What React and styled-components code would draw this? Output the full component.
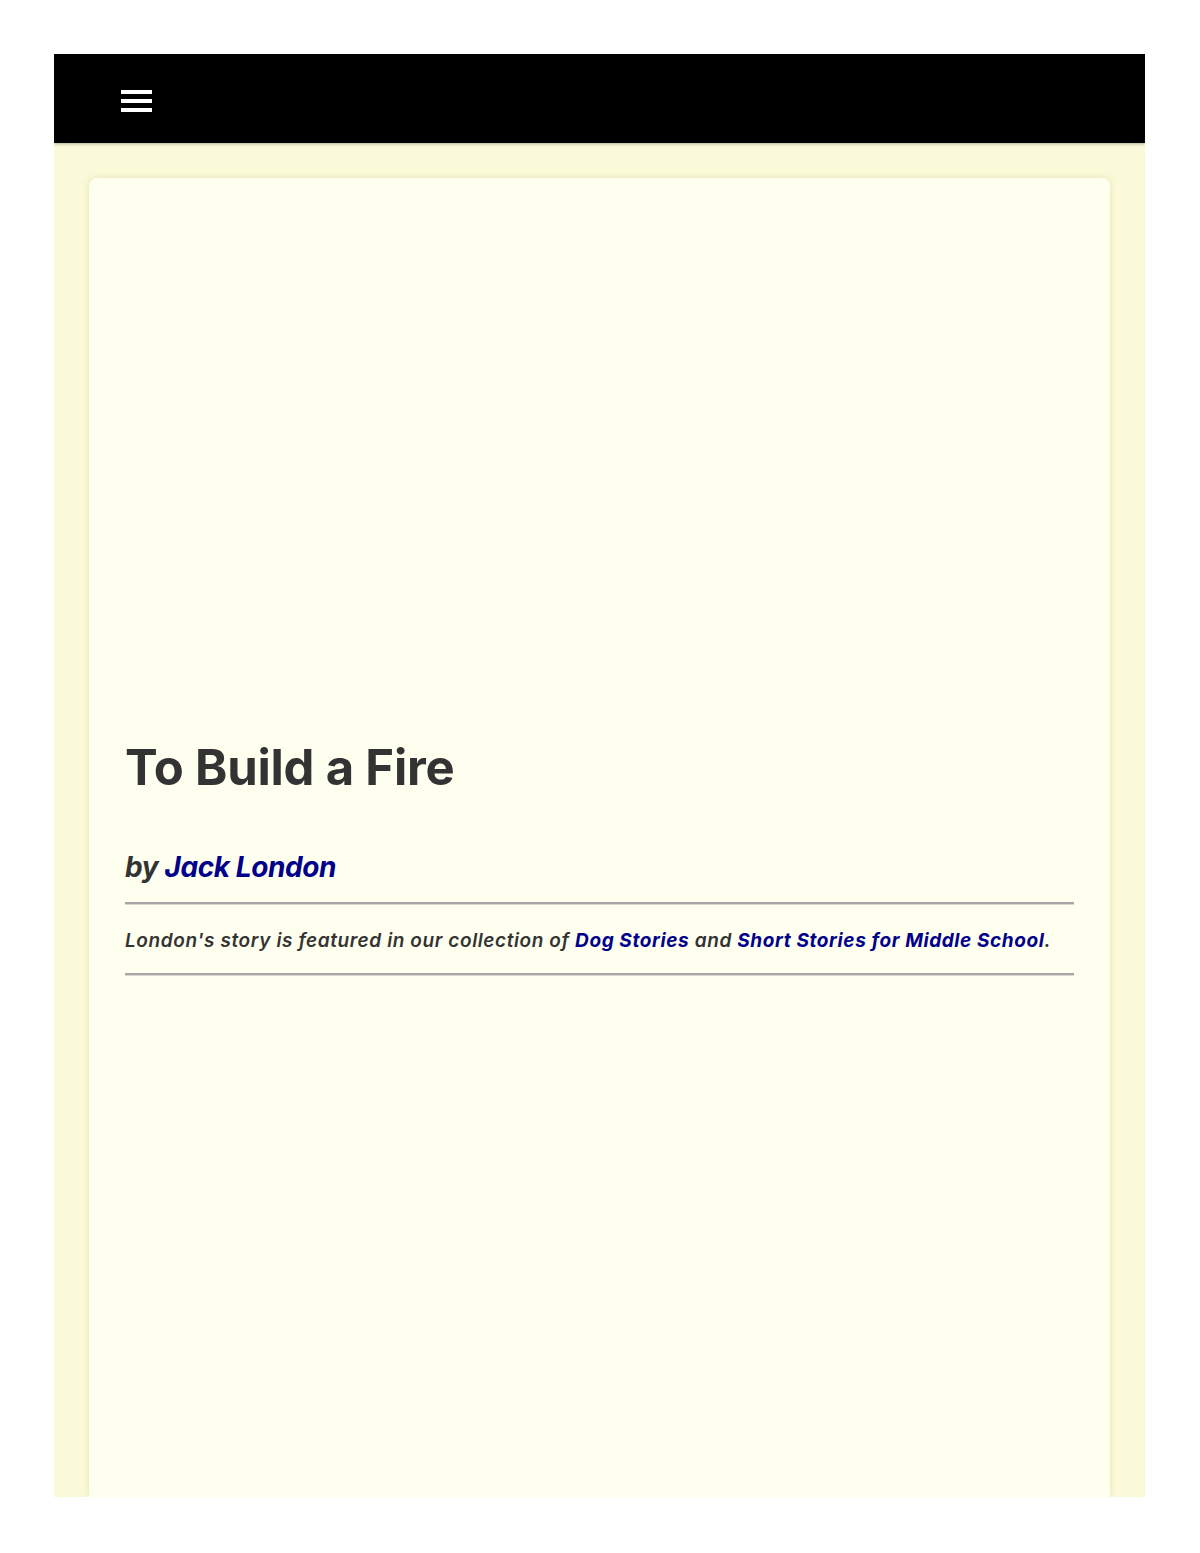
import React from 'react';
import styled, { createGlobalStyle } from 'styled-components';

//global page reset
const GlobalStyle = createGlobalStyle`
  html, body {
    margin: 0;
    padding: 0;
    background: #ffffff;
  }
  body {
    font-family: Inter, "Noto Sans", sans-serif;
  }
`;

//white border round the whole sheet
const Page = styled.div`
  padding: 54px 55px 56px 54px;
`;

//clipped frame that holds the site
const Frame = styled.div`
  height: 1443px;
  overflow: hidden;
  background: #fbfad8;
  display: flex;
  flex-direction: column;
`;

//black top bar
const TopBar = styled.header`
  flex: none;
  height: 89px;
  background: #000;
  display: flex;
  align-items: center;
  padding-left: 67px;
  box-shadow: 0 1px 3px rgba(0, 0, 0, 0.3);
`;

const MenuButton = styled.button`
  border: 0;
  background: none;
  padding: 0;
  margin-top: 5px;
  width: 31px;
  height: 22px;
  display: flex;
  flex-direction: column;
  justify-content: space-between;
  cursor: pointer;
`;

const MenuBar = styled.span`
  display: block;
  height: 4px;
  background: #fff;
`;

const Main = styled.main`
  flex: 1;
  padding: 35px 35px 0 35px;
  display: flex;
`;

//story card
const Card = styled.article`
  flex: 1;
  background: #fffff0;
  border-radius: 8px 8px 0 0;
  box-shadow: 0 0 6px rgba(180, 180, 120, 0.35);
  padding: 0 36px;
`;

//empty picture area above the title
const Cover = styled.div`
  height: 560px;
`;

const Title = styled.h1`
  margin: 0;
  color: #333;
  font-size: 49px;
  font-weight: 700;
  letter-spacing: -0.2px;
  line-height: 60px;
`;

const Byline = styled.h2`
  margin: 51px 0 0 0;
  color: #333;
  font-size: 28px;
  font-style: italic;
  font-weight: 700;
  letter-spacing: -0.4px;
  line-height: 36px;
`;

const StoryLink = styled.a`
  color: #00008b;
  text-decoration: none;
`;

const Rule = styled.hr`
  margin: ${(props) => props.top || 0}px 0 0 0;
  border: 0;
  border-top: 2px solid #a6a6a6;
  border-bottom: 1px solid #d8d8d0;
`;

const Note = styled.p`
  margin: 24px 0 20px 0;
  color: #333;
  font-size: 19px;
  font-style: italic;
  font-weight: 600;
  letter-spacing: 0.6px;
  line-height: 24px;
`;

const NoteLink = styled(StoryLink)`
  font-weight: 700;
`;

const App = () => {
  return (
    <Page>
      <GlobalStyle />
      <Frame>
        <TopBar>
          <MenuButton aria-label="menu">
            <MenuBar />
            <MenuBar />
            <MenuBar />
          </MenuButton>
        </TopBar>
        <Main>
          <Card>
            <Cover />
            <Title>To Build a Fire</Title>
            <Byline>
              by <StoryLink href="#">Jack London</StoryLink>
            </Byline>
            <Rule top={17} />
            <Note>
              London's story is featured in our collection of{' '}
              <NoteLink href="#">Dog Stories</NoteLink> and{' '}
              <NoteLink href="#">Short Stories for Middle School</NoteLink>.
            </Note>
            <Rule />
          </Card>
        </Main>
      </Frame>
    </Page>
  );
};

export default App;
